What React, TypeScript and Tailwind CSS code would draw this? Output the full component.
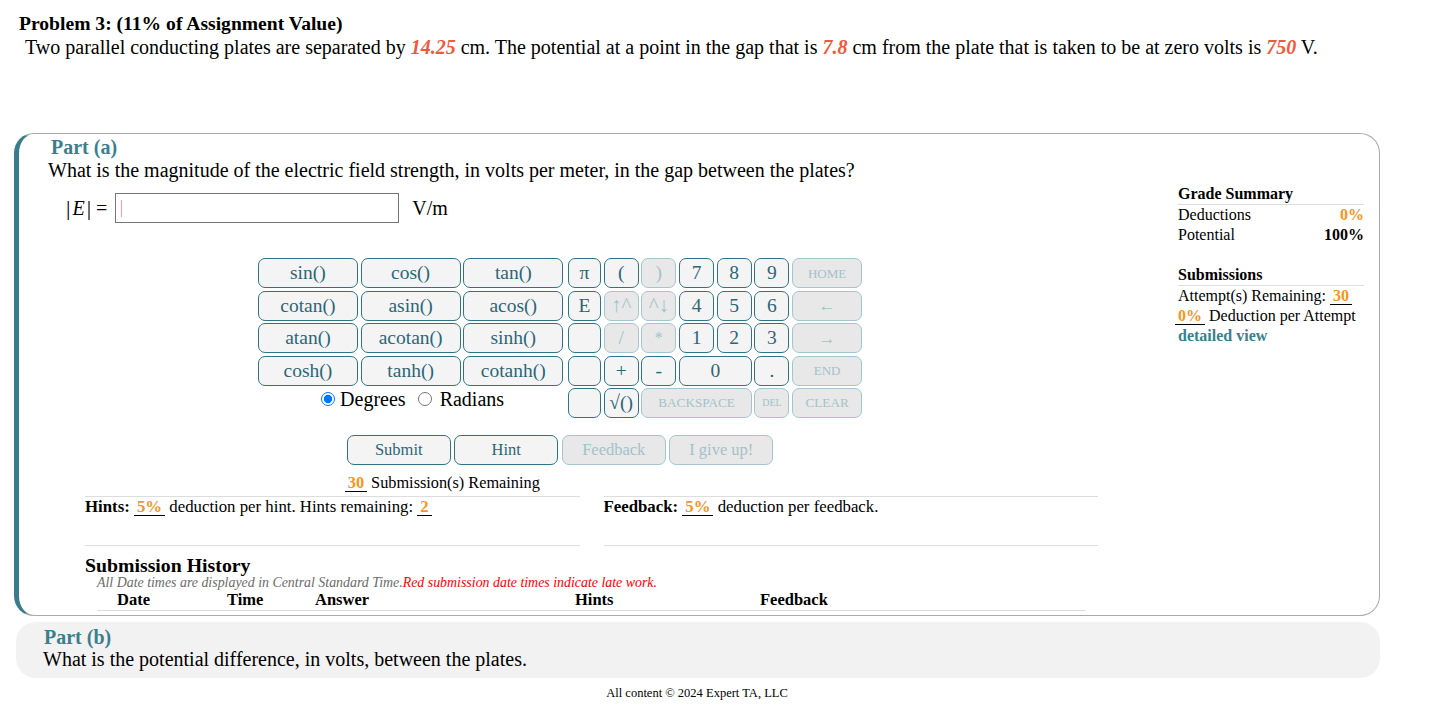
import clsx from "clsx";

const on = "bg-[#f4f4f4] border border-[#2e7487] text-[#2c6676]";
const off = "bg-[#e8e8e8] border border-[#a3c6ce] text-[#a3c2ca]";

function Key({ label, dim, size, className }: { label?: string; dim?: boolean; size?: string; className?: string }) {
  return (
    <button
      type="button"
      className={clsx(
        "h-[30px] rounded-[7px] flex items-center justify-center leading-none",
        size ?? "text-[19.5px]",
        dim ? off : on,
        className
      )}
    >
      {label}
    </button>
  );
}

function Keypad() {
  const fns = [
    ["sin()", "cos()", "tan()"],
    ["cotan()", "asin()", "acos()"],
    ["atan()", "acotan()", "sinh()"],
    ["cosh()", "tanh()", "cotanh()"],
  ];
  return (
    <div className="grid grid-cols-[100px_100px_100px_35px_35px_35px_35px_35px_35px_70px] grid-rows-[30px_30px_30px_30px_30px] gap-x-[2.7px] gap-y-[2.5px]">
      {/* row 1 */}
      {fns[0].map((f) => <Key key={f} label={f} />)}
      <Key label="π" className="ml-[2px]" />
      <Key label="(" />
      <Key label=")" dim />
      <Key label="7" />
      <Key label="8" />
      <Key label="9" />
      <Key label="HOME" dim size="text-[13px]" />
      {/* row 2 */}
      {fns[1].map((f) => <Key key={f} label={f} />)}
      <Key label="E" className="ml-[2px]" />
      <Key label="↑^" dim size="text-[21px]" />
      <Key label="^↓" dim size="text-[21px]" />
      <Key label="4" />
      <Key label="5" />
      <Key label="6" />
      <Key label="←" dim size="text-[17px]" />
      {/* row 3 */}
      {fns[2].map((f) => <Key key={f} label={f} />)}
      <Key className="ml-[2px]" />
      <Key label="/" dim />
      <Key label="*" dim size="text-[16px]" />
      <Key label="1" />
      <Key label="2" />
      <Key label="3" />
      <Key label="→" dim size="text-[17px]" />
      {/* row 4 */}
      {fns[3].map((f) => <Key key={f} label={f} />)}
      <Key className="ml-[2px]" />
      <Key label="+" />
      <Key label="-" />
      <Key label="0" className="col-span-2" />
      <Key label="." />
      <Key label="END" dim size="text-[13px]" />
      {/* row 5 */}
      <div className="col-span-3 flex items-start justify-center pl-[4px] text-[20px] leading-[22px] text-black">
        <label className="flex items-center gap-[5px]">
          <input type="radio" name="unit" defaultChecked className="w-[14px] h-[14px] m-0" />
          Degrees
        </label>
        <label className="flex items-center gap-[8px] ml-[12px]">
          <input type="radio" name="unit" className="w-[14px] h-[14px] m-0" />
          Radians
        </label>
      </div>
      <Key className="ml-[2px]" />
      <Key label="√()" />
      <Key label="BACKSPACE" dim size="text-[13.2px]" className="col-span-3" />
      <Key label="DEL" dim size="text-[10px]" />
      <Key label="CLEAR" dim size="text-[13.2px]" />
    </div>
  );
}

function Pct({ v }: { v: string }) {
  return (
    <span className="inline-block border-b border-black px-[3px] leading-[17px] font-bold text-[#f7941d]">{v}</span>
  );
}

export default function App() {
  return (
    <div className="w-[1430px] min-h-[722px] bg-white pl-[14px] pr-[50px] text-black font-['Liberation_Serif',serif]">
      {/* Problem statement */}
      <div className="pt-[12px] pl-[5px]">
        <div className="text-[19.6px] leading-[23px] font-bold">Problem 3: (11% of Assignment Value)</div>
        <div className="text-[20px] leading-[23px] pl-[6px] mt-[1px]">
          Two parallel conducting plates are separated by{" "}
          <span className="italic font-bold text-[#f4583a]">14.25</span> cm. The potential at a point in the gap that
          is <span className="italic font-bold text-[#f4583a]">7.8</span> cm from the plate that is taken to be at zero
          volts is <span className="italic font-bold text-[#f4583a]">750</span> V.
        </div>
      </div>

      {/* Part (a) */}
      <div className="mt-[74px] w-[1366px] border border-l-[5px] border-[#a9a9a9] border-l-[#3a7d8a] rounded-[20px] flex">
        <div className="w-[1082px] pt-[2px] pb-[4px]">
          <div className="pl-[32px] text-[20px] leading-[22px] font-bold text-[#3b7f8e]">Part (a)</div>
          <div className="pl-[29px] text-[20px] leading-[22px] mt-[1px]">
            What is the magnitude of the electric field strength, in volts per meter, in the gap between the plates?
          </div>
          <div className="flex items-center mt-[12px] pl-[47px] text-[20px]">
            <span className="mr-[8px] flex items-center">
              <span className="text-[22px] leading-none">|</span>
              <span className="italic mx-[2px]">E</span>
              <span className="text-[22px] leading-none">|</span>
              <span className="ml-[5px]">=</span>
            </span>
            <div className="w-[284px] h-[30px] border border-[#767676] flex items-center pl-[5px]">
              <span className="w-[1px] h-[17px] bg-[#f29ab8]" />
            </div>
            <span className="ml-[13px]">V/m</span>
          </div>

          <div className="flex justify-center mt-[35px]">
            <Keypad />
          </div>

          {/* Action buttons */}
          <div className="flex justify-center mt-[17px]">
            <div>
              <div className="flex gap-[3.5px] text-[16.5px]">
                <button type="button" className={clsx("w-[104px] h-[30px] rounded-[7px]", on)}>Submit</button>
                <button type="button" className={clsx("w-[104px] h-[30px] rounded-[7px]", on)}>Hint</button>
                <button type="button" className={clsx("w-[104px] h-[30px] rounded-[7px]", off)}>Feedback</button>
                <button type="button" className={clsx("w-[104px] h-[30px] rounded-[7px]", off)}>I give up!</button>
              </div>
              <div className="mt-[8px] text-[16.3px] leading-[19px] -ml-[2px]">
                <Pct v="30" /> Submission(s) Remaining
              </div>
            </div>
          </div>

          {/* Hints / Feedback */}
          <div className="grid grid-cols-2 gap-x-[24px] pl-[66px] pr-[3px] mt-[4px] text-[16.8px] leading-[20px]">
            <div className="h-[50px] border-t border-b border-[#dddddd]">
              <span className="font-bold">Hints:</span> <Pct v="5%" /> deduction per hint. Hints remaining: <Pct v="2" />
            </div>
            <div className="h-[50px] border-t border-b border-[#dddddd]">
              <span className="font-bold">Feedback:</span> <Pct v="5%" /> deduction per feedback.
            </div>
          </div>

          {/* Submission history */}
          <div className="pl-[66px] mt-[8px] text-[19.8px] leading-[22px] font-bold">Submission History</div>
          <div className="pl-[78px] text-[13.9px] leading-[15px] italic -mt-[1px]">
            <span className="text-[#6b6b6b]">All Date times are displayed in Central Standard Time.</span>
            <span className="text-[#ff0000]">Red submission date times indicate late work.</span>
          </div>
          <div className="ml-[78px] w-[989px] flex border-b border-[#dddddd] text-[16.5px] leading-[20px] font-bold">
            <div className="w-[130px] pl-[20px]">Date</div>
            <div className="w-[88px]">Time</div>
            <div className="w-[260px]">Answer</div>
            <div className="w-[185px]">Hints</div>
            <div>Feedback</div>
          </div>
        </div>

        {/* Grade summary sidebar */}
        <div className="ml-[77px] w-[188px] pt-[50px] text-[16px] leading-[20px] whitespace-nowrap">
          <div className="font-bold border-b border-[#dddddd] w-[186px]">Grade Summary</div>
          <div className="flex justify-between w-[186px]">
            <span>Deductions</span>
            <span className="font-bold text-[#f7941d]">0%</span>
          </div>
          <div className="flex justify-between w-[186px]">
            <span>Potential</span>
            <span className="font-bold">100%</span>
          </div>
          <div className="font-bold border-b border-[#dddddd] mt-[20px] w-[186px]">Submissions</div>
          <div>
            Attempt(s) Remaining: <Pct v="30" />
          </div>
          <div>
            <span className="-ml-[3px]"><Pct v="0%" /></span> Deduction per Attempt
          </div>
          <div className="font-bold text-[#3b7f8e]">detailed view</div>
        </div>
      </div>

      {/* Part (b) */}
      <div className="mt-[6px] ml-[2px] w-[1364px] h-[56px] bg-[#f2f2f2] rounded-[20px] pl-[27px] pt-[4px]">
        <div className="text-[20px] leading-[22px] font-bold text-[#3b7f8e] pl-[1px]">Part (b)</div>
        <div className="text-[20px] leading-[22px]">What is the potential difference, in volts, between the plates.</div>
      </div>

      <div className="w-[1366px] text-center text-[12.5px] leading-[16px] mt-[7px]">All content © 2024 Expert TA, LLC</div>
    </div>
  );
}
